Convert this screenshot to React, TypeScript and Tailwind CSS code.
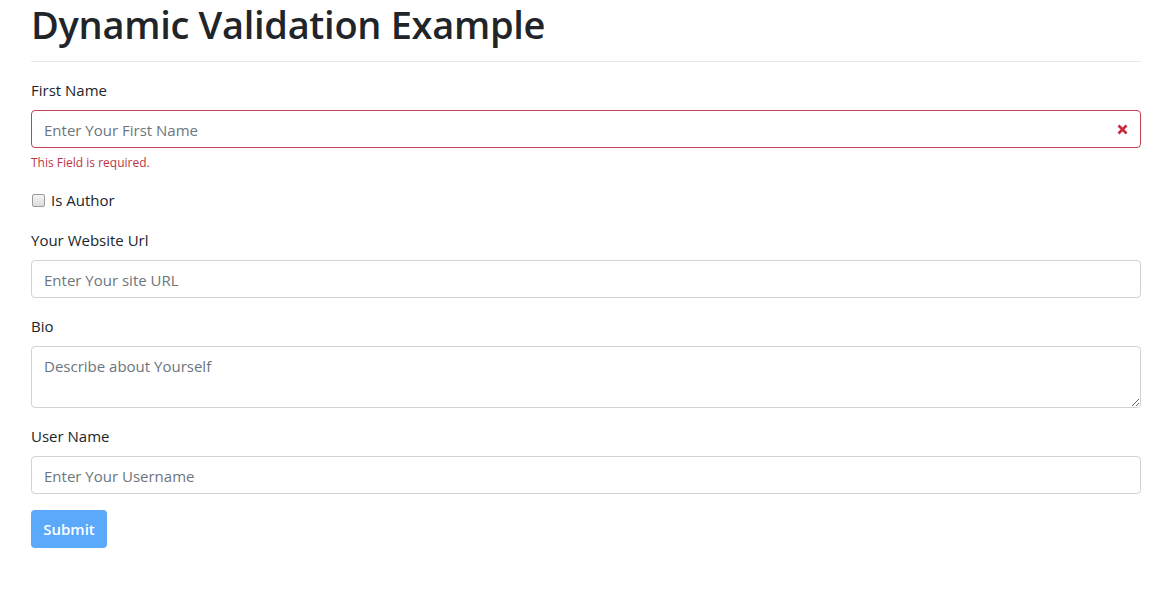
import React from "react";

const font = { fontFamily: '"Open Sans", "Noto Sans", Arial, sans-serif' };

function Field({
  label,
  placeholder,
}: {
  label: string;
  placeholder: string;
}) {
  return (
    <div className="mb-4">
      <label className="mb-2 block text-[15px] leading-6 text-[#212529]">{label}</label>
      <input
        placeholder={placeholder}
        className="block h-[38px] w-full rounded-[4px] border border-[#ced4da] bg-white px-3 pt-px text-[15px] text-[#495057] outline-none placeholder:text-[#6c757d]"
      />
    </div>
  );
}

export default function App() {
  return (
    <div className="min-h-[591px] bg-white text-[#212529]" style={font}>
      <div className="w-[1141px] pl-[31px]">
        {/* Header */}
        <h1 className="h-[45px] text-[38px] font-semibold leading-[48px] tracking-[-0.3px] text-[#212529]">
          Dynamic Validation Example
        </h1>
        <hr className="mt-4 mb-4 border-t border-[#e5e7e9]" />

        <form onSubmit={(e) => e.preventDefault()}>
          {/* First name (invalid) */}
          <div className="mb-4">
            <label className="mb-2 block text-[15px] leading-6">First Name</label>
            <div className="relative">
              <input
                placeholder="Enter Your First Name"
                className="block h-[38px] w-full rounded-[4px] border border-[#c2404f] bg-white px-3 pt-px pr-9 text-[15px] outline-none placeholder:text-[#6c757d]"
              />
              <svg
                className="absolute right-[13px] top-[14px] h-[11px] w-[11px]"
                viewBox="0 0 11 11"
              >
                <path d="M1.5 1.5 L9.5 9.5 M9.5 1.5 L1.5 9.5" stroke="#c8293b" strokeWidth="2.6" />
              </svg>
            </div>
            <div className="mt-[5px] text-[12px] leading-[19px] text-[#bd3442]">This Field is required.</div>
          </div>

          {/* Checkbox */}
          <div className="mb-4 flex h-6 items-center">
            <span className="ml-px mr-[6px] h-[13px] w-[13px] rounded-[2px] border border-[#9a9a9a] bg-gradient-to-b from-[#f4f4f4] to-[#dcdcdc]" />
            <span className="text-[15px] leading-6">Is Author</span>
          </div>

          <Field label="Your Website Url" placeholder="Enter Your site URL" />

          <div className="mb-4">
            <label className="mb-2 block text-[15px] leading-6">Bio</label>
            <textarea
              rows={2}
              placeholder="Describe about Yourself"
              className="block h-[62px] w-full resize-y rounded-[4px] border border-[#ced4da] bg-white px-3 pt-[7px] pb-1.5 text-[15px] leading-6 outline-none placeholder:text-[#6c757d]"
            />
          </div>

          <Field label="User Name" placeholder="Enter Your Username" />

          <button
            type="submit"
            disabled
            className="h-[38px] w-[76px] rounded-[4px] bg-[#5aa9fb] text-center text-[15px] font-semibold text-white"
          >
            Submit
          </button>
        </form>
      </div>
    </div>
  );
}
